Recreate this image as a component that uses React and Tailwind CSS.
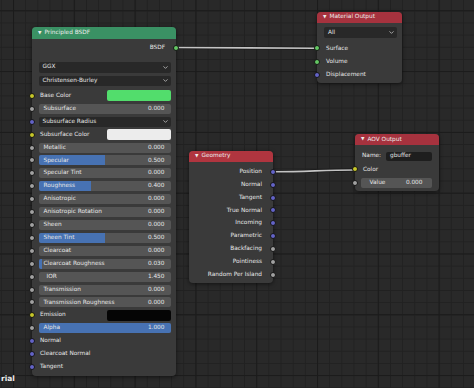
import { ChevronDown } from 'lucide-react';

const SOCK = {
  float: 'bg-[#a1a1a1]',
  color: 'bg-[#c7c729]',
  vector: 'bg-[#6363c7]',
  shader: 'bg-[#63c763]',
};

const Socket = ({ type, side }) => (
  <span
    className={`absolute top-1/2 -translate-y-1/2 w-[6px] h-[6px] rounded-full border border-[#151515] ${
      side === 'left' ? 'left-[-3px]' : 'right-[-3px]'
    } ${SOCK[type]}`}
  />
);

const Node = ({ className, header, title, children }) => (
  <div className={`absolute rounded-[4px] bg-[#3a3a3a] shadow-[0_1px_4px_rgba(0,0,0,0.55)] ${className}`}>
    <div className={`flex items-center gap-[3px] rounded-t-[4px] pl-[6px] text-[#ececec] ${header}`}>
      <span className="text-[4.5px] leading-none">▼</span>
      <span className="leading-none">{title}</span>
    </div>
    {children}
  </div>
);

const Dropdown = ({ label, className = '' }) => (
  <div className={`flex h-[10.5px] flex-1 items-center justify-between rounded-[2px] bg-[#282828] pl-[4px] pr-[2px] text-[#e6e6e6] ${className}`}>
    <span className="leading-none">{label}</span>
    <ChevronDown size={7} strokeWidth={2.5} className="text-[#cfcfcf]" />
  </div>
);

const inputs = [
  { kind: 'color', label: 'Base Color', swatch: 'bg-[#52dd6c]', sock: 'color' },
  { kind: 'slider', label: 'Subsurface', value: '0.000', fill: 0, sock: 'float' },
  { kind: 'dropdown', label: 'Subsurface Radius', sock: 'vector' },
  { kind: 'color', label: 'Subsurface Color', swatch: 'bg-[#ececec]', sock: 'color' },
  { kind: 'slider', label: 'Metallic', value: '0.000', fill: 0, sock: 'float' },
  { kind: 'slider', label: 'Specular', value: '0.500', fill: 0.5, sock: 'float' },
  { kind: 'slider', label: 'Specular Tint', value: '0.000', fill: 0, sock: 'float' },
  { kind: 'slider', label: 'Roughness', value: '0.400', fill: 0.4, sock: 'float' },
  { kind: 'slider', label: 'Anisotropic', value: '0.000', fill: 0, sock: 'float' },
  { kind: 'slider', label: 'Anisotropic Rotation', value: '0.000', fill: 0, sock: 'float' },
  { kind: 'slider', label: 'Sheen', value: '0.000', fill: 0, sock: 'float' },
  { kind: 'slider', label: 'Sheen Tint', value: '0.500', fill: 0.5, sock: 'float' },
  { kind: 'slider', label: 'Clearcoat', value: '0.000', fill: 0, sock: 'float' },
  { kind: 'slider', label: 'Clearcoat Roughness', value: '0.030', fill: 0.03, sock: 'float' },
  { kind: 'number', label: 'IOR', value: '1.450', sock: 'float' },
  { kind: 'slider', label: 'Transmission', value: '0.000', fill: 0, sock: 'float' },
  { kind: 'slider', label: 'Transmission Roughness', value: '0.000', fill: 0, sock: 'float' },
  { kind: 'color', label: 'Emission', swatch: 'bg-[#050505]', sock: 'color' },
  { kind: 'slider', label: 'Alpha', value: '1.000', fill: 1, sock: 'float' },
  { kind: 'label', label: 'Normal', sock: 'vector' },
  { kind: 'label', label: 'Clearcoat Normal', sock: 'vector' },
  { kind: 'label', label: 'Tangent', sock: 'vector' },
];

const Field = ({ label, value, fill, indent }) => (
  <div className="relative flex h-[10px] flex-1 items-center justify-between overflow-hidden rounded-[2px] bg-[#555555] pr-[6px] text-[#e6e6e6]">
    {fill > 0 && (
      <div className="absolute inset-y-0 left-0 bg-[#4772b3]" style={{ width: `${fill * 100}%` }} />
    )}
    <span className={`relative leading-none ${indent ? 'pl-[8px]' : 'pl-[5px]'}`}>{label}</span>
    <span className="relative leading-none">{value}</span>
  </div>
);

const InputRow = ({ item }) => (
  <div className="relative flex h-[12.92px] items-center">
    <Socket type={item.sock} side="left" />
    {item.kind === 'color' && (
      <div className="flex flex-1 items-center justify-between pl-[8px] pr-[5.5px]">
        <span className="leading-none text-[#e6e6e6]">{item.label}</span>
        <span className={`h-[11px] w-[64px] rounded-[2px] ${item.swatch}`} />
      </div>
    )}
    {(item.kind === 'slider' || item.kind === 'number') && (
      <div className="flex flex-1 pl-[6.5px] pr-[5.5px]">
        <Field label={item.label} value={item.value} fill={item.fill || 0} indent={item.kind === 'number'} />
      </div>
    )}
    {item.kind === 'dropdown' && (
      <div className="flex flex-1 pl-[6.5px] pr-[5.5px]">
        <Dropdown label={item.label} />
      </div>
    )}
    {item.kind === 'label' && <span className="pl-[8px] leading-none text-[#e6e6e6]">{item.label}</span>}
  </div>
);

const OutRow = ({ label, sock, h = 'h-[12.92px]' }) => (
  <div className={`relative flex items-center justify-end pr-[11px] ${h}`}>
    <span className="leading-none text-[#e6e6e6]">{label}</span>
    <Socket type={sock} side="right" />
  </div>
);

const geometryOut = [
  ['Position', 'vector'],
  ['Normal', 'vector'],
  ['Tangent', 'vector'],
  ['True Normal', 'vector'],
  ['Incoming', 'vector'],
  ['Parametric', 'vector'],
  ['Backfacing', 'float'],
  ['Pointiness', 'float'],
  ['Random Per Island', 'float'],
];

const Grid = () => (
  <svg className="absolute inset-0" width="474" height="388">
    <defs>
      <pattern id="minor" width="12.16" height="12.16" x="0.86" y="10.3" patternUnits="userSpaceOnUse">
        <path d="M0.5 0V12.16M0 0.5H12.16" stroke="#212121" strokeWidth="1" fill="none" />
      </pattern>
      <pattern id="major" width="60.8" height="60.8" x="13" y="10.3" patternUnits="userSpaceOnUse">
        <path d="M0.5 0V60.8M0 0.5H60.8" stroke="#1b1b1b" strokeWidth="1.2" fill="none" />
      </pattern>
    </defs>
    <rect width="474" height="388" fill="#292929" />
    <rect width="474" height="388" fill="url(#minor)" />
    <rect width="474" height="388" fill="url(#major)" />
  </svg>
);

const Links = () => (
  <svg className="absolute inset-0" width="474" height="388">
    <g fill="none" strokeLinecap="round">
      <path d="M176 47.5 C240 47.5 255 48.3 317.5 48.3" stroke="#1a1a1a" strokeWidth="3" />
      <path d="M176 47.5 C240 47.5 255 48.3 317.5 48.3" stroke="#c4c4c4" strokeWidth="1.6" />
      <path d="M273.3 171.7 C310 171.7 320 170 355 170" stroke="#1a1a1a" strokeWidth="3" />
      <path d="M273.3 171.7 C310 171.7 320 170 355 170" stroke="#c4c4c4" strokeWidth="1.6" />
    </g>
  </svg>
);

export default function App() {
  return (
    <div className="relative h-[388px] w-[474px] overflow-hidden bg-[#292929] font-['DejaVu_Sans',sans-serif] text-[5.8px]">
      <Grid />
      <Links />

      {/* Principled BSDF */}
      <Node className="left-[32px] top-[27px] w-[144px] pb-[2.5px]" header="h-[12px] bg-[#3a9164]" title="Principled BSDF">
        <div className="pt-[2px]">
          <OutRow label="BSDF" sock="shader" h="h-[13px]" />
        </div>
        <div className="mt-[6.5px] flex flex-col pl-[6.5px] pr-[5.5px]">
          <div className="flex h-[13.5px] items-center">
            <Dropdown label="GGX" />
          </div>
          <div className="flex h-[13.5px] items-center">
            <Dropdown label="Christensen-Burley" />
          </div>
        </div>
        <div className="mt-[2px] flex flex-col">
          {inputs.map((item) => (
            <InputRow key={item.label} item={item} />
          ))}
        </div>
      </Node>

      {/* Geometry */}
      <Node className="left-[189px] top-[151px] w-[84px] pb-[1.5px]" header="h-[10.5px] bg-[#b0353f]" title="Geometry">
        <div className="flex flex-col pt-[3.75px]">
          {geometryOut.map(([label, sock]) => (
            <OutRow key={label} label={label} sock={sock} />
          ))}
        </div>
      </Node>

      {/* Material Output */}
      <Node className="left-[317px] top-[12px] w-[85px] pb-[2px]" header="h-[10.5px] bg-[#a6323e]" title="Material Output">
        <div className="flex h-[13px] items-center pl-[7px] pr-[5.5px] mt-[3.7px]">
          <Dropdown label="All" />
        </div>
        <div className="mt-[2.65px] flex flex-col">
          {[
            ['Surface', 'shader'],
            ['Volume', 'shader'],
            ['Displacement', 'vector'],
          ].map(([label, sock]) => (
            <div key={label} className="relative flex h-[13.2px] items-center pl-[9px]">
              <Socket type={sock} side="left" />
              <span className="leading-none text-[#e6e6e6]">{label}</span>
            </div>
          ))}
        </div>
      </Node>

      {/* AOV Output */}
      <Node className="left-[355px] top-[134px] w-[84px] pb-[2px]" header="h-[11px] bg-[#a6323e]" title="AOV Output">
        <div className="flex flex-col pt-[4.5px]">
          <div className="flex h-[13.3px] items-center pl-[7px] pr-[7.5px]">
            <span className="w-[24px] leading-none text-[#e6e6e6]">Name:</span>
            <div className="flex h-[9px] flex-1 items-center rounded-[2px] bg-[#1e1e1e] pl-[4px] text-[#e6e6e6]">
              <span className="leading-none">gbuffer</span>
            </div>
          </div>
          <div className="relative flex h-[13.3px] items-center pl-[8px]">
            <Socket type="color" side="left" />
            <span className="leading-none text-[#e6e6e6]">Color</span>
          </div>
          <div className="relative flex h-[13.3px] items-center pl-[6px] pr-[7.5px]">
            <Socket type="float" side="left" />
            <div className="flex h-[10px] flex-1 items-center justify-between rounded-[2px] bg-[#555555] pl-[8.5px] pr-[9px] text-[#e6e6e6]">
              <span className="leading-none">Value</span>
              <span className="leading-none">0.000</span>
            </div>
          </div>
        </div>
      </Node>

      <div className="absolute left-[1px] top-[375px] text-[7.5px] font-bold leading-none text-[#eeeeee]">
        rial
      </div>
    </div>
  );
}
